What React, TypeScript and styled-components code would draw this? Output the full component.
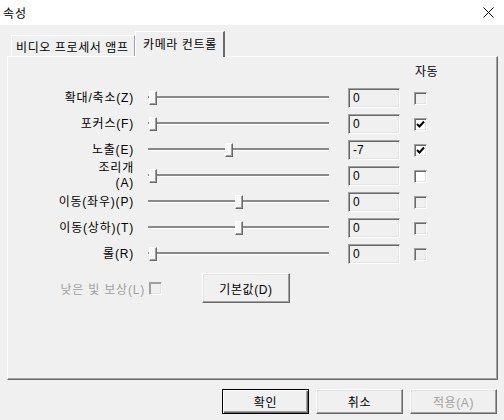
import styled, { createGlobalStyle } from 'styled-components';

const GlobalStyle = createGlobalStyle`
  html, body {
    margin: 0;
    padding: 0;
    background: #f0f0f0;
  }
  body {
    font-family: "Liberation Sans", "Noto Sans CJK KR", sans-serif;
    font-size: 12px;
    color: #000;
  }
`;

type Control = {
  label: string;
  value: number;
  min: number;
  max: number;
  auto: boolean;
  whiteBox?: boolean;
};

const CONTROLS: Control[] = [
  { label: '확대/축소(Z)', value: 0, min: 0, max: 10, auto: false },
  { label: '포커스(F)', value: 0, min: 0, max: 10, auto: true },
  { label: '노출(E)', value: -7, min: -11, max: -2, auto: true },
  { label: '조리개\n(A)', value: 0, min: 0, max: 10, auto: false, whiteBox: true },
  { label: '이동(좌우)(P)', value: 0, min: -10, max: 10, auto: false },
  { label: '이동(상하)(T)', value: 0, min: -10, max: 10, auto: false },
  { label: '롤(R)', value: 0, min: 0, max: 10, auto: false },
];

const THUMB_TRAVEL = 172;

const Check = ({ checked, white, disabled }: { checked?: boolean; white?: boolean; disabled?: boolean }) => (
  <CheckBox $white={checked || white} $disabled={disabled}>
    {checked && (
      <svg width="9" height="9" viewBox="0 0 9 9">
        <path d="M1 4 L3.5 6.5 L8 1.5" stroke="#000" strokeWidth="2" fill="none" />
      </svg>
    )}
  </CheckBox>
);

const Slider = ({ value, min, max }: { value: number; min: number; max: number }) => (
  <SliderBox>
    <SliderTrack />
    <SliderThumb style={{ left: 3 + Math.round(((value - min) / (max - min)) * THUMB_TRAVEL) }} />
  </SliderBox>
);

const App = () => (
  <>
    <GlobalStyle />
    <Window>
      <TitleBar>
        <Title>속성</Title>
        <svg width="11" height="11" viewBox="0 0 11 11">
          <path d="M0.5 0.5 L10.5 10.5 M10.5 0.5 L0.5 10.5" stroke="#000" strokeWidth="1" />
        </svg>
      </TitleBar>
      <TabRow>
        <Tab>비디오 프로세서 앰프</Tab>
        <Tab $active>카메라 컨트롤</Tab>
      </TabRow>
      <Panel>
        <HeaderRow>자동</HeaderRow>
        {CONTROLS.map((c) => (
          <Row key={c.label}>
            <Label>{c.label}</Label>
            <Slider value={c.value} min={c.min} max={c.max} />
            <ValueBox>{c.value}</ValueBox>
            <CheckCell $gap={14}>
              <Check checked={c.auto} white={c.whiteBox} />
            </CheckCell>
          </Row>
        ))}
        <BottomRow>
          <DisabledLabel>낮은 빛 보상(L)</DisabledLabel>
          <CheckCell $gap={4}>
            <Check disabled />
          </CheckCell>
          <DefaultButton>기본값(D)</DefaultButton>
        </BottomRow>
      </Panel>
      <ButtonRow>
        <Button $primary>확인</Button>
        <Button>취소</Button>
        <Button $disabled>적용(A)</Button>
      </ButtonRow>
    </Window>
  </>
);

const Window = styled.div`
  width: 504px;
  height: 420px;
  display: flex;
  flex-direction: column;
  background: #f0f0f0;
  overflow: hidden;
`;

const TitleBar = styled.div`
  height: 25px;
  background: #fff;
  display: flex;
  align-items: center;
  justify-content: space-between;
  padding: 0 10px 0 3px;
  flex-shrink: 0;
`;

const Title = styled.span`
  font-size: 12px;
  letter-spacing: 1px;
`;

const TabRow = styled.div`
  display: flex;
  align-items: flex-end;
  height: 25px;
  margin-top: 6px;
  padding-left: 4px;
  margin-left: 7px;
`;

const Tab = styled.div<{ $active?: boolean }>`
  position: relative;
  z-index: ${({ $active }) => ($active ? 1 : 0)};
  box-sizing: border-box;
  height: ${({ $active }) => ($active ? '26px' : '21px')};
  margin-bottom: ${({ $active }) => ($active ? '-1px' : '0')};
  width: ${({ $active }) => ($active ? '90px' : '124px')};
  padding: ${({ $active }) => ($active ? '3px 0 0 7px' : '2px 0 0 4px')};
  background: #f0f0f0;
  border-top: 1px solid #fff;
  border-left: 1px solid #fff;
  border-right: ${({ $active }) => ($active ? '2px solid #696969' : '1px solid #a0a0a0')};
  font-size: 12px;
  letter-spacing: 0.6px;
  white-space: nowrap;
`;

const Panel = styled.div`
  box-sizing: border-box;
  height: 324px;
  margin: 0 6px 0 7px;
  border-top: 1px solid #fff;
  border-left: 1px solid #fff;
  border-right: 1px solid #696969;
  border-bottom: 1px solid #696969;
  box-shadow: inset -1px -1px 0 #a0a0a0;
  padding: 7px 0 0 0;
  display: flex;
  flex-direction: column;
  gap: 6px;
`;

const HeaderRow = styled.div`
  height: 16px;
  line-height: 16px;
  padding-left: 407px;
  margin-bottom: 2px;
  letter-spacing: 0.5px;
`;

const Row = styled.div`
  display: flex;
  align-items: center;
  height: 20px;
`;

const Label = styled.div`
  width: 126px;
  text-align: right;
  white-space: pre-line;
  line-height: 15px;
  letter-spacing: 0.8px;
  flex-shrink: 0;
`;

const SliderBox = styled.div`
  position: relative;
  width: 186px;
  height: 20px;
  margin-left: 12px;
  flex-shrink: 0;
`;

const SliderTrack = styled.div`
  margin: 8px 3px 0 2px;
  height: 2px;
  background: #8a8a8a;
  border-bottom: 1px solid #fff;
`;

const SliderThumb = styled.div`
  position: absolute;
  top: 3px;
  box-sizing: border-box;
  width: 8px;
  height: 14px;
  background: #f7f7f7;
  border-top: 1px solid #fff;
  border-left: 1px solid #fff;
  border-right: 1px solid #696969;
  border-bottom: 1px solid #696969;
  box-shadow: inset -1px -1px 0 #a0a0a0;
`;

const ValueBox = styled.div`
  box-sizing: border-box;
  width: 52px;
  height: 20px;
  margin-left: 16px;
  padding: 1px 0 0 4px;
  line-height: 16px;
  font-size: 12px;
  background: #f0f0f0;
  border-top: 1px solid #a0a0a0;
  border-left: 1px solid #a0a0a0;
  border-right: 1px solid #fff;
  border-bottom: 1px solid #fff;
  box-shadow: inset 1px 1px 0 #696969, inset -1px -1px 0 #e3e3e3;
  flex-shrink: 0;
`;

const CheckCell = styled.div<{ $gap: number }>`
  margin-left: ${({ $gap }) => $gap}px;
  display: flex;
  align-items: center;
  flex-shrink: 0;
`;

const CheckBox = styled.div<{ $white?: boolean; $disabled?: boolean }>`
  box-sizing: border-box;
  width: 13px;
  height: 13px;
  display: flex;
  align-items: center;
  justify-content: center;
  background: ${({ $white }) => ($white ? '#fff' : '#f0f0f0')};
  border-top: 1px solid #a0a0a0;
  border-left: 1px solid #a0a0a0;
  border-right: 1px solid #fff;
  border-bottom: 1px solid #fff;
  box-shadow: ${({ $disabled }) =>
    $disabled ? 'inset 1px 1px 0 #a0a0a0, inset -1px -1px 0 #e3e3e3' : 'inset 1px 1px 0 #696969, inset -1px -1px 0 #e3e3e3'};
`;

const BottomRow = styled.div`
  display: flex;
  align-items: center;
  margin-top: 3px;
  height: 30px;
`;

const DisabledLabel = styled.div`
  width: 137px;
  text-align: right;
  color: #a0a0a0;
  letter-spacing: 0.8px;
  flex-shrink: 0;
`;

const buttonBase = `
  box-sizing: border-box;
  display: flex;
  align-items: center;
  justify-content: center;
  background: #f0f0f0;
  font-family: "Liberation Sans", "Noto Sans CJK KR", sans-serif;
  font-size: 12px;
  letter-spacing: 0.6px;
  border-top: 1px solid #fff;
  border-left: 1px solid #fff;
  border-right: 1px solid #696969;
  border-bottom: 1px solid #696969;
  box-shadow: inset -1px -1px 0 #a0a0a0, inset 1px 1px 0 #e3e3e3;
  flex-shrink: 0;
`;

const DefaultButton = styled.div`
  ${buttonBase}
  width: 88px;
  height: 30px;
  margin-left: 40px;
`;

const ButtonRow = styled.div`
  display: flex;
  justify-content: flex-end;
  gap: 7px;
  margin-top: 9px;
  padding-right: 7px;
`;

const Button = styled.div<{ $primary?: boolean; $disabled?: boolean }>`
  ${buttonBase}
  width: 87px;
  height: 25px;
  color: ${({ $disabled }) => ($disabled ? '#a0a0a0' : '#000')};
  ${({ $primary }) =>
    $primary
      ? `
    border: 1px solid #000;
    box-shadow: inset 1px 1px 0 #fff, inset -1px -1px 0 #696969, inset -2px -2px 0 #a0a0a0;
  `
      : ''}
`;

export default App;
